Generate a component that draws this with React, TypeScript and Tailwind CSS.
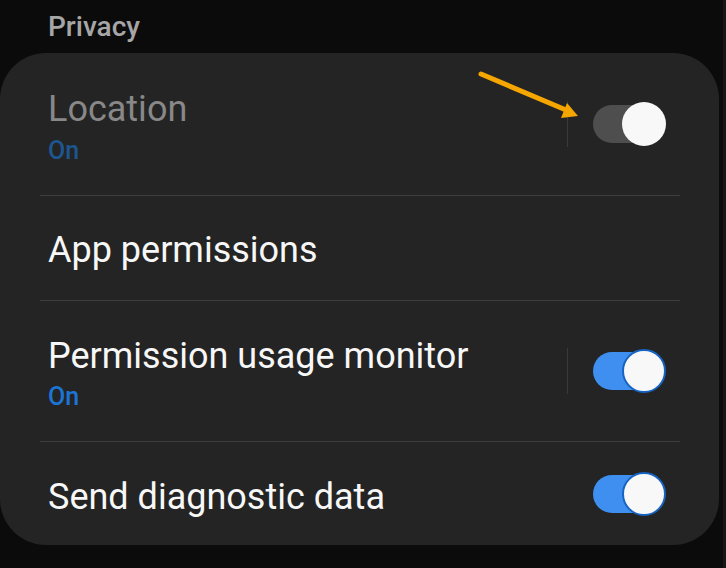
import React from "react";

function Toggle({ dim }: { dim?: boolean }) {
  return (
    <div className="relative w-[73px] h-[44px] flex items-center">
      <div
        className={
          "w-[70px] h-[38px] rounded-full " + (dim ? "bg-[#4e4e4e]" : "bg-[#3e8ff0]")
        }
      />
      <div
        className={
          "absolute right-0 top-0 w-[44px] h-[44px] rounded-full bg-[#f8f8f8] " +
          (dim ? "" : "border-[2.5px] border-[#1763c2]")
        }
      />
    </div>
  );
}

function Sep() {
  return <div className="w-px h-[46px] bg-[#3a3a3a] mr-[25px]" />;
}

export default function App() {
  return (
    <div
      className="relative w-[726px] h-[568px] overflow-hidden bg-[#0b0b0b]"
      style={{ fontFamily: "Roboto, 'Noto Sans', sans-serif" }}
    >
      <div className="pl-12 pt-[13px] text-[28px] leading-[28px] font-medium text-[#a6a6a6]">
        Privacy
      </div>
      <div className="mt-[12px] w-[719px] rounded-[46px] bg-[#242424] pl-10 pr-[39px]">
        {/* Location */}
        <div className="h-[142px] flex items-center pl-2 pr-[14px]">
          <div className="flex-1 pt-[6px]">
            <div className="text-[36px] leading-[42px] text-[#888888]">Location</div>
            <div className="mt-[6px] text-[25px] leading-[30px] font-medium text-[#1d568f]">On</div>
          </div>
          <Sep />
          <Toggle dim />
        </div>
        <div className="h-px bg-[#3d3d3d]" />
        {/* App permissions */}
        <div className="h-[104px] flex items-center pl-2 pt-[3px]">
          <div className="text-[36px] leading-[42px] text-[#f7f7f7]">App permissions</div>
        </div>
        <div className="h-px bg-[#3d3d3d]" />
        {/* Permission usage monitor */}
        <div className="h-[140px] flex items-center pl-2 pr-[14px]">
          <div className="flex-1 pt-[4px]">
            <div className="text-[36px] leading-[42px] text-[#f7f7f7]">Permission usage monitor</div>
            <div className="mt-[5px] text-[25px] leading-[30px] font-medium text-[#1c74d4]">On</div>
          </div>
          <Sep />
          <Toggle />
        </div>
        <div className="h-px bg-[#3d3d3d]" />
        {/* Send diagnostic data */}
        <div className="h-[103px] flex items-center pl-2 pr-[14px]">
          <div className="flex-1 pt-[6px] text-[36px] leading-[42px] text-[#f7f7f7]">Send diagnostic data</div>
          <Toggle />
        </div>
      </div>
      <div className="absolute top-0 right-0 w-[3px] h-full bg-[#161616]" />
      <svg
        className="absolute left-0 top-0"
        width="726"
        height="568"
        viewBox="0 0 726 568"
      >
        <line x1="481" y1="74" x2="566" y2="110" stroke="#f5a600" strokeWidth="5" strokeLinecap="round" />
        <polygon points="578,116 567,103 561,118" fill="#f5a600" />
      </svg>
    </div>
  );
}
